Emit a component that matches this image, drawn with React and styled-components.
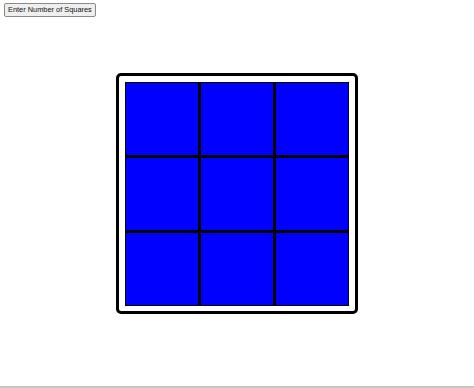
import React from "react";
import styled, { createGlobalStyle } from "styled-components";

const GlobalStyle = createGlobalStyle`
  html, body {
    margin: 0;
    padding: 0;
    background: #ffffff;
    font-family: "Liberation Sans", Arial, sans-serif;
  }
`;

const Page = styled.div`
  height: 100vh;
  display: flex;
  flex-direction: column;
  overflow: hidden;
`;

const Toolbar = styled.div`
  padding: 3px 4px 0;
  display: flex;
`;

const Button = styled.button`
  font-family: "Liberation Sans", Arial, sans-serif;
  font-size: 7.4px;
  line-height: 1;
  white-space: nowrap;
  color: #111;
  background: #efefef;
  border: 1px solid #8a8a8a;
  border-radius: 2px;
  padding: 0 3px;
  height: 14px;
  cursor: pointer;
`;

const Stage = styled.div`
  flex: 1;
  display: flex;
  justify-content: center;
  align-items: flex-start;
  padding-top: 56px;
`;

const Board = styled.div`
  border: 3px solid #000;
  border-radius: 5px;
  padding: 6px 6px 5px;
  background: #fff;
`;

const Grid = styled.div`
  display: grid;
  grid-template-columns: repeat(${p => p.$n}, 72px);
  grid-auto-rows: 72px;
  gap: 3px;
  padding: 1px;
  background: #000;
`;

const Square = styled.div`
  background: #0000ff;
`;

const BottomBar = styled.div`
  height: 2px;
  background: #c3c8bf;
`;

export default function App() {
  const n = 3;
  return (
    <Page>
      <GlobalStyle />
      <Toolbar>
        <Button>Enter Number of Squares</Button>
      </Toolbar>
      <Stage>
        <Board>
          <Grid $n={n}>
            {Array.from({ length: n * n }).map((_, i) => (
              <Square key={i} />
            ))}
          </Grid>
        </Board>
      </Stage>
      <BottomBar />
    </Page>
  );
}
